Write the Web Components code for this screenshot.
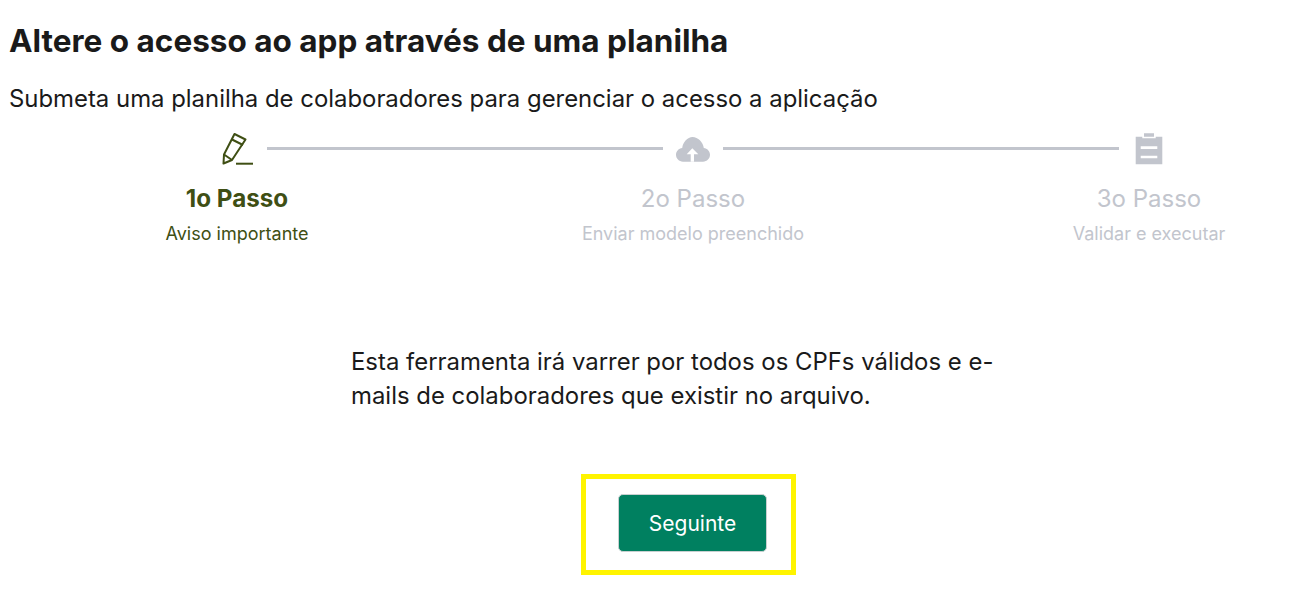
<!DOCTYPE html>
<html lang="pt-BR">
<head>
<meta charset="utf-8">
<title>Planilha</title>
<style>
  html, body { margin: 0; background: #fff; }
  body { padding: 0 0 0 9px; font-family: Inter, "Liberation Sans", sans-serif; color: #1a1a1a; }
</style>
</head>
<body>
<sheet-page></sheet-page>

<script>
  const ICONS = {
    pencil: `<svg width="34" height="34" viewBox="0 0 34 34" fill="none" stroke="currentColor" stroke-width="2"><path d="M14.500 2 25.500 7.500 12 28 3.500 31.500 4 22.500Z" stroke-linejoin="round"/><path d="M12 7.500 23 13M4 22.500 12 28"/><path d="M16 31.700H33"/></svg>`,
    cloud: `<svg width="34" height="28" viewBox="0 0 34 28"><path fill="currentColor" d="M7 26.700C3 26.700 0 23.500 0 19.800 0 16.300 2.800 13.300 6.200 13 7 7 11.500 2 16.500 2 22 2 27 7 27.800 13 31.200 13.300 34 16.300 34 19.800 34 23.500 31 26.700 27 26.700Z"/><path fill="#fff" d="M16.300 13.300 22.300 19.300H18V26.700H14.700V19.300H10.700Z"/></svg>`,
    clipboard: `<svg width="28" height="34" viewBox="0 0 28 34"><path fill="currentColor" d="M9 1.300H19V4.700H9ZM.7 4.700H7.300V6.300H20.700V4.700H27.300V32.300H.7Z"/><path fill="#fff" d="M5.700 14.300H22.300V17H5.700ZM5.700 23.700H22.300V26.300H5.700Z"/></svg>`
  };

  class SheetStep extends HTMLElement {
    connectedCallback() {
      const active = this.hasAttribute("active");
      this.attachShadow({ mode: "open" }).innerHTML = `
        <style>
          :host { display: flex; flex: none; flex-direction: column; align-items: center; width: 228px; color: ${active ? "#3f4f14" : "#c2c5cd"}; }
          .icon { height: 36px; width: 100%; display: flex; align-items: center; justify-content: center; position: relative; }
          .icon svg { display: block; }
          .line { position: absolute; left: calc(50% + 30px); width: 396px; top: 16px; height: 3px; background: #c2c5cd; }
          .name { margin-top: 18px; font-size: ${active ? 24.2 : 24}px; line-height: 28px; font-weight: ${active ? 700 : 400}; white-space: nowrap; }
          .desc { margin-top: 11px; font-size: 18px; line-height: 20px; white-space: nowrap; }
        </style>
        <div class="icon">${ICONS[this.getAttribute("icon")]}${this.hasAttribute("line") ? '<div class="line"></div>' : ""}</div>
        <div class="name">${this.getAttribute("name")}</div>
        <div class="desc"><slot></slot></div>`;
    }
  }

  class SheetStepper extends HTMLElement {
    constructor() {
      super();
      this.attachShadow({ mode: "open" }).innerHTML = `
        <style>:host { display: flex; gap: 228px; margin-top: 16px; padding-left: 114px; }</style>
        <slot></slot>`;
    }
  }

  class SheetButton extends HTMLElement {
    constructor() {
      super();
      this.attachShadow({ mode: "open" }).innerHTML = `
        <style>
          :host { display: block; width: 215px; height: 101px; box-sizing: border-box; border: 5px solid #fff400; padding: 15px 32px; }
          button {
            display: block; width: 149px; height: 58px; padding: 0; border: 1px solid #c8d0d0; border-radius: 5px;
            background: #008060; color: #fff; font: 400 21px Inter, "Liberation Sans", sans-serif; cursor: pointer;
          }
        </style>
        <button><slot></slot></button>`;
    }
  }

  class SheetPage extends HTMLElement {
    constructor() {
      super();
      this.attachShadow({ mode: "open" }).innerHTML = `
        <style>
          :host { display: block; }
          h1 { margin: 0; padding-top: 23px; font-size: 31.500px; line-height: 36px; font-weight: 700; color: #1a1a1a; }
          .sub { margin: 24px 0 0; font-size: 23.900px; line-height: 32px; color: #1a1a1a; }
          .msg { margin: 101px 0 0 342px; width: 650px; font-size: 23.920px; line-height: 34px; color: #1a1a1a; }
          .actions { display: flex; justify-content: flex-start; margin: 61px 0 0 572px; }
        </style>
        <h1>Altere o acesso ao app através de uma planilha</h1>
        <p class="sub">Submeta uma planilha de colaboradores para gerenciar o acesso a aplicação</p>
        <sheet-stepper>
          <sheet-step icon="pencil" name="1o Passo" line active>Aviso importante</sheet-step>
          <sheet-step icon="cloud" name="2o Passo" line>Enviar modelo preenchido</sheet-step>
          <sheet-step icon="clipboard" name="3o Passo">Validar e executar</sheet-step>
        </sheet-stepper>
        <p class="msg">Esta ferramenta irá varrer por todos os CPFs válidos e e-mails de colaboradores que existir no arquivo.</p>
        <div class="actions"><sheet-button>Seguinte</sheet-button></div>`;
    }
  }

  customElements.define("sheet-step", SheetStep);
  customElements.define("sheet-stepper", SheetStepper);
  customElements.define("sheet-button", SheetButton);
  customElements.define("sheet-page", SheetPage);
</script>
</body>
</html>
